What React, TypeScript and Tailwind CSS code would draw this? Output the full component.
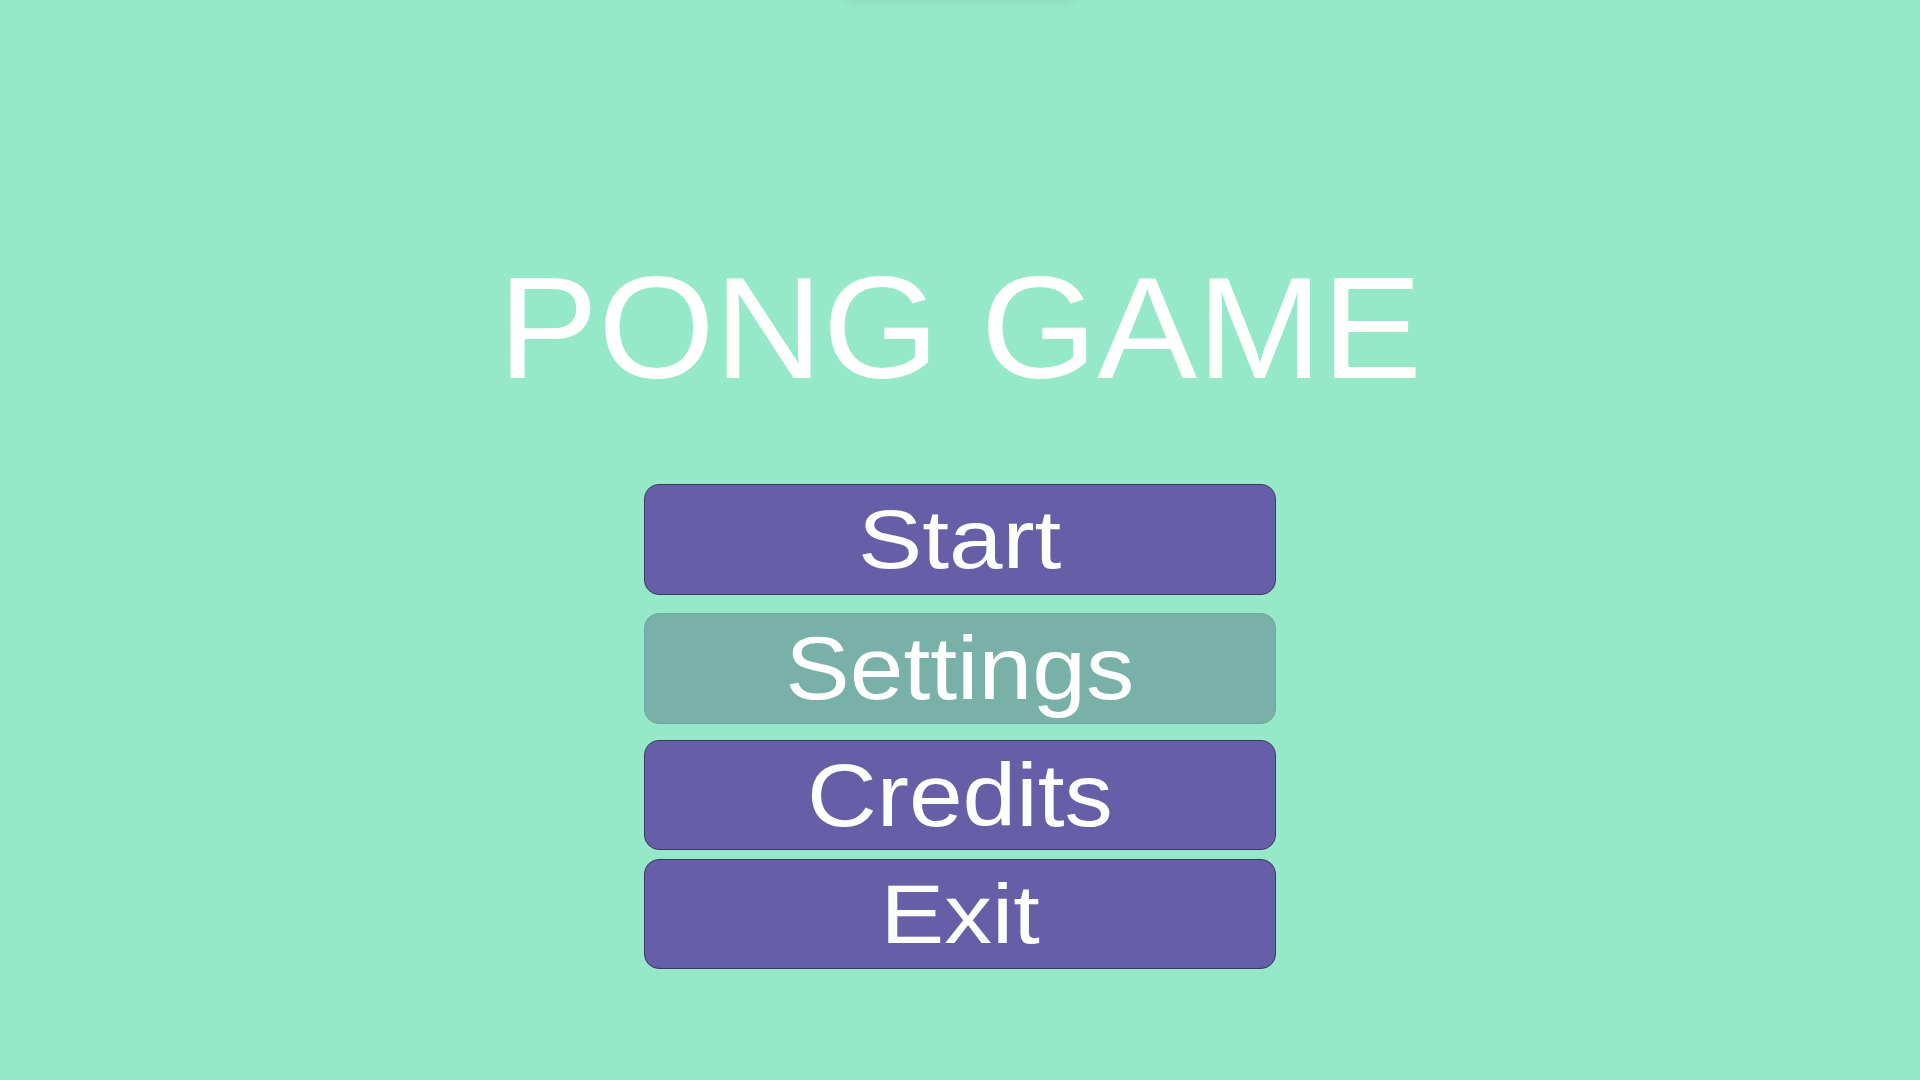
import React from "react";

type MenuItem = {
  label: string;
  disabled?: boolean;
  // per-button spacing and text fit, the menu isn't perfectly regular
  gap: string;
  height: string;
  text: string;
};

const items: MenuItem[] = [
  { label: "Start", gap: "mt-[83px]", height: "h-[111px]", text: "text-[83px] scale-x-[1.16]" },
  { label: "Settings", disabled: true, gap: "mt-[18px]", height: "h-[111px]", text: "text-[89px] scale-x-[1.085]" },
  { label: "Credits", gap: "mt-[16px]", height: "h-[110px]", text: "text-[89px] scale-x-[1.085]" },
  { label: "Exit", gap: "mt-[9px]", height: "h-[110px]", text: "text-[83px] scale-x-[1.15]" },
];

function MenuButton({ item }: { item: MenuItem }) {
  const colors = item.disabled
    ? "bg-[#79b1a8] border-[#6ea89d]"
    : "bg-[#665ea6] border-[#3c3a5c]";
  return (
    <button
      className={`${item.gap} ${item.height} ${colors} w-[632px] rounded-[15px] border flex items-center justify-center text-white cursor-pointer`}
    >
      <span className={`${item.text} leading-none inline-block`}>{item.label}</span>
    </button>
  );
}

export default function App() {
  return (
    <div
      className="min-h-screen w-full bg-[#96e9c8] flex flex-col items-center overflow-hidden"
      style={{ fontFamily: '"Liberation Sans", Arial, sans-serif' }}
    >
      <div className="w-[230px] h-[20px] -mt-[20px] rounded-b-lg shadow-[0_2px_12px_rgba(0,0,0,0.07)]" />

      <h1 className="mt-[257px] text-white text-[144px] leading-none font-normal scale-x-[1.04]">
        PONG GAME
      </h1>

      {items.map((item) => (
        <MenuButton key={item.label} item={item} />
      ))}
    </div>
  );
}
